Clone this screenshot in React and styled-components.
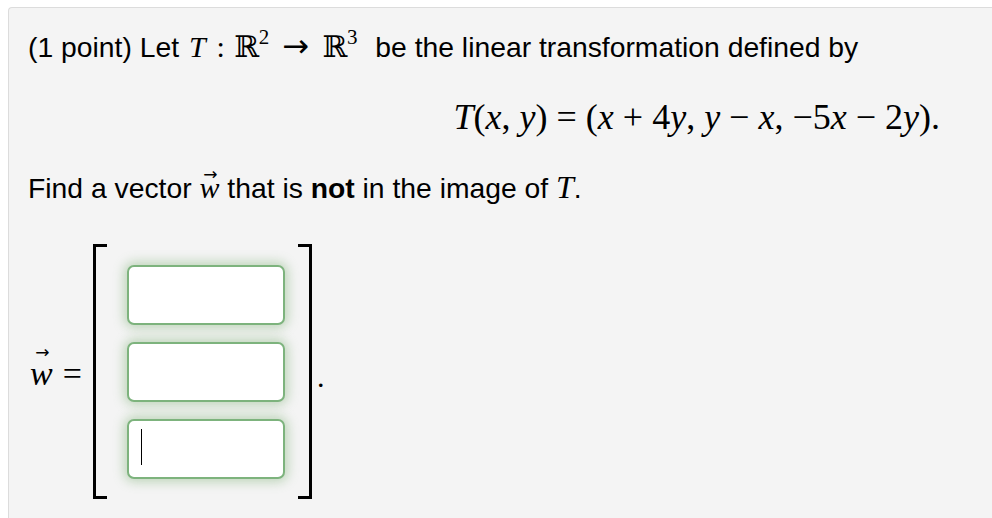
import React from "react";
import styled, { createGlobalStyle } from "styled-components";

const GlobalStyle = createGlobalStyle`
  html, body {
    margin: 0;
    padding: 0;
    background: #fff;
    overflow: hidden;
  }
`;

const Panel = styled.section`
  margin: 7px 0 0 8px;
  height: 530px;
  box-sizing: border-box;
  background: #f4f4f4;
  border: 1px solid #dcdcdc;
  border-right: none;
  border-bottom: none;
  border-top-left-radius: 4px;
  padding: 21px 0 0 19px;
  font-family: "Liberation Sans", Arial, sans-serif;
  font-size: 28.3px;
  color: #000;
`;

const Line = styled.p`
  margin: 0;
  line-height: 34px;
  white-space: nowrap;
`;

const Math = styled.span`
  font-family: ${(p) =>
    p.sans ? '"DejaVu Sans", sans-serif' : '"Liberation Serif", "DejaVu Serif", serif'};
  font-size: ${(p) => p.size || 30}px;
  font-style: ${(p) => (p.italic ? "italic" : "normal")};
  margin: 0 ${(p) => p.gap || 0}px;
`;

const Sup = styled.sup`
  font-family: "Liberation Serif", "Times New Roman", serif;
  font-size: 21px;
  vertical-align: 0;
  position: relative;
  top: -13px;
  margin-right: ${(p) => p.after || 0}px;
`;

const Display = styled.div`
  display: flex;
  justify-content: flex-end;
  padding: 30px 52px 0 0;
  line-height: 40px;
  font-family: "Liberation Serif", "Times New Roman", serif;
  font-size: 36px;
  white-space: nowrap;
`;

const I = styled.i`
  font-style: italic;
`;

const Vec = styled.span`
  position: relative;
  display: inline-block;
  font-family: "Liberation Serif", "Times New Roman", serif;
  font-style: italic;
  font-size: ${(p) => p.size || 30}px;
  &::before {
    content: "→";
    position: absolute;
    left: 55%;
    top: ${(p) => p.arrowTop || -14}px;
    transform: translateX(-50%);
    font-style: normal;
    font-family: "DejaVu Sans", sans-serif;
    font-size: 17px;
  }
`;

const Question = styled(Line)`
  margin-top: 33px;
`;

const MatrixRow = styled.div`
  display: flex;
  align-items: center;
  margin-top: 39px;
`;

const Label = styled.div`
  display: flex;
  align-items: center;
  gap: 10px;
  font-family: "Liberation Serif", "Times New Roman", serif;
  font-size: 34px;
  width: 63px;
  padding-left: 2px;
  padding-top: 4px;
`;

const Bracket = styled.div`
  width: 11px;
  height: 249px;
  border: 3px solid #000;
  border-${(p) => (p.side === "left" ? "right" : "left")}: none;
`;

const Column = styled.div`
  display: flex;
  flex-direction: column;
  gap: 17px;
  padding: 0 13px 0 20px;
`;

const Field = styled.input`
  width: 158px;
  height: 60px;
  box-sizing: border-box;
  border: 2px solid #7db37d;
  border-radius: 7px;
  background: #fff;
  box-shadow: 0 0 11px 3px rgba(115, 170, 105, 0.42);
  outline: none;
  padding: 0 12px;
  font-size: 22px;
  font-family: "Liberation Sans", Arial, sans-serif;
`;

const Caret = styled.div`
  position: relative;
  &::after {
    content: "";
    position: absolute;
    left: 14px;
    top: 10px;
    width: 1px;
    height: 36px;
    background: #000;
  }
`;

const Dot = styled.span`
  font-family: "Liberation Serif", serif;
  font-size: 30px;
  margin-left: 5px;
  padding-top: 10px;
`;

export default function App() {
  return (
    <>
      <GlobalStyle />
      <Panel>
        <Line>
          (1 point) Let <Math italic gap={2}>T</Math>
          <Math gap={9}>:</Math>
          <Math>ℝ</Math>
          <Sup>2</Sup>
          <Math sans size={32} gap={13}>→</Math>
          <Math>ℝ</Math>
          <Sup after={2}>3</Sup>&nbsp; be the linear transformation defined by
        </Line>
        <Display>
          <span>
            <I>T</I>(<I>x</I>, <I>y</I>) = (<I>x</I> + 4<I>y</I>, <I>y</I> − <I>x</I>, −5<I>x</I> − 2<I>y</I>).
          </span>
        </Display>
        <Question>
          Find a vector <Vec>w</Vec> that is <b>not</b> in the image of{" "}
          <Math italic size={32}>T</Math>.
        </Question>
        <MatrixRow>
          <Label>
            <Vec size={34} arrowTop={-13}>w</Vec>
            <span>=</span>
          </Label>
          <Bracket side="left" />
          <Column>
            <Field />
            <Field />
            <Caret>
              <Field />
            </Caret>
          </Column>
          <Bracket side="right" />
          <Dot>.</Dot>
        </MatrixRow>
      </Panel>
    </>
  );
}
